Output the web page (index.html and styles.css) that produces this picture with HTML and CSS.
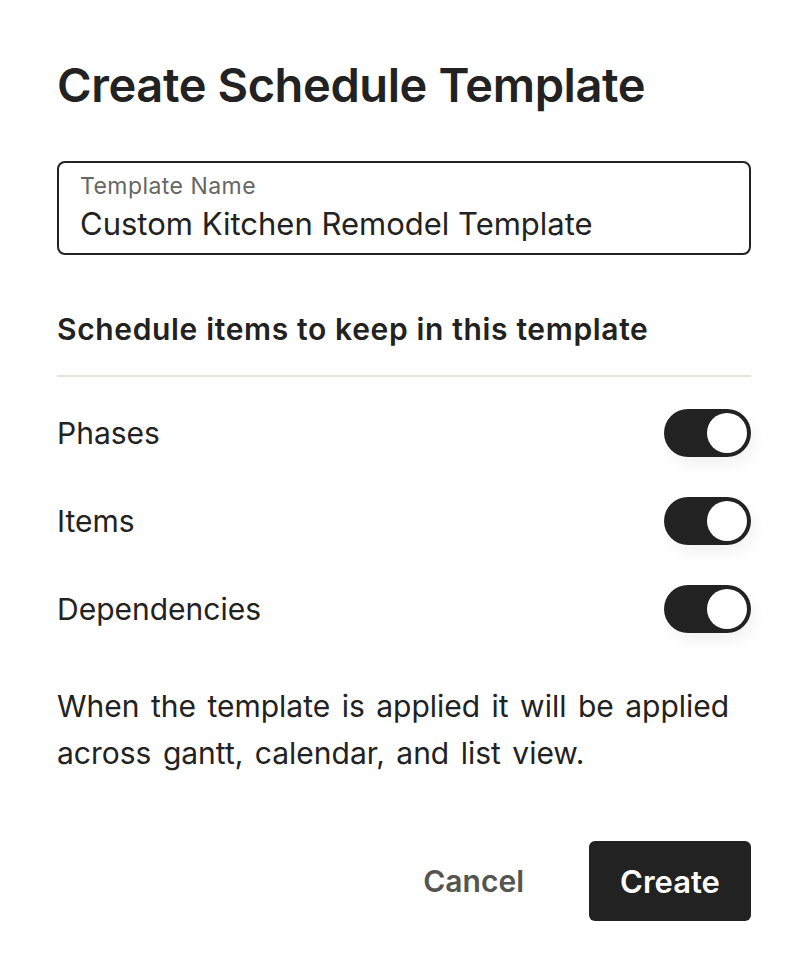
FILE: index.html
```html
<!DOCTYPE html>
<html lang="en">
<head>
<meta charset="utf-8">
<title>Create Schedule Template</title>
<link rel="stylesheet" href="styles.css">
</head>
<body>
<div class="dialog">
  <h1 class="title">Create Schedule Template</h1>
  <div class="field">
    <label class="field-label" for="tname">Template Name</label>
    <input class="field-input" id="tname" type="text" value="Custom Kitchen Remodel Template">
  </div>
  <h2 class="section-title">Schedule items to keep in this template</h2>
  <div class="divider"></div>
  <div class="rows">
    <div class="row"><span class="row-label">Phases</span><span class="toggle on"><span class="knob"></span></span></div>
    <div class="row"><span class="row-label">Items</span><span class="toggle on"><span class="knob"></span></span></div>
    <div class="row"><span class="row-label">Dependencies</span><span class="toggle on"><span class="knob"></span></span></div>
  </div>
  <p class="note">When the template is applied it will be applied across gantt, calendar, and list view.</p>
  <div class="actions">
    <button class="btn btn-cancel" type="button">Cancel</button>
    <button class="btn btn-create" type="button">Create</button>
  </div>
</div>
</body>
</html>
```

FILE: styles.css
```css
* { box-sizing: border-box; }
html, body { margin: 0; padding: 0; background: #fff; }
body {
  font-family: Inter, "Noto Sans", "Liberation Sans", sans-serif;
  color: #222222;
}
.dialog {
  width: 808px;
  padding: 55px 57px 0 57px;
  display: flex;
  flex-direction: column;
}
.title {
  margin: 0;
  font-size: 47px;
  line-height: 60px;
  font-weight: 600;
  letter-spacing: -0.4px;
}
.field {
  margin-top: 46px;
  height: 94px;
  border: 2px solid #222;
  border-radius: 8px;
  padding: 10px 21px;
  display: flex;
  flex-direction: column;
  gap: 6px;
}
.field-label {
  font-size: 23px;
  line-height: 26px;
  color: #666663;
  letter-spacing: 0.45px;
}
.field-input {
  border: 0;
  outline: none;
  padding: 0;
  margin: 0;
  font-family: inherit;
  font-size: 31px;
  line-height: 38px;
  height: 38px;
  color: #222;
  background: transparent;
}
.section-title {
  margin: 56px 0 0 0;
  font-size: 30px;
  line-height: 36px;
  font-weight: 600;
  letter-spacing: 0.65px;
}
.divider {
  margin-top: 28px;
  height: 2px;
  background: #e6e4dd;
}
.rows {
  margin-top: 12px;
  display: flex;
  flex-direction: column;
}
.row {
  height: 88px;
  display: flex;
  align-items: center;
  justify-content: space-between;
}
.row-label {
  font-size: 30px;
}
.toggle {
  width: 87px;
  height: 48px;
  border-radius: 24px;
  background: #222;
  display: flex;
  align-items: center;
  justify-content: flex-end;
  padding: 4px;
  box-shadow: 4px 8px 14px rgba(0,0,0,0.05);
}
.knob {
  width: 40px;
  height: 40px;
  border-radius: 50%;
  background: #fff;
}
.note {
  margin: 30px 0 0 0;
  font-size: 30px;
  line-height: 47px;
  word-spacing: 3px;
}
.actions {
  margin-top: 64px;
  display: flex;
  justify-content: flex-end;
  align-items: center;
  gap: 41px;
}
.btn {
  font-family: inherit;
  font-size: 31px;
  font-weight: 600;
  border: 0;
  cursor: pointer;
}
.btn-cancel {
  background: transparent;
  color: #55554f;
  padding: 0 24px;
  height: 80px;
  font-size: 30px;
}
.btn-create {
  background: #222;
  color: #fff;
  width: 162px;
  height: 80px;
  border-radius: 6px;
}
```
